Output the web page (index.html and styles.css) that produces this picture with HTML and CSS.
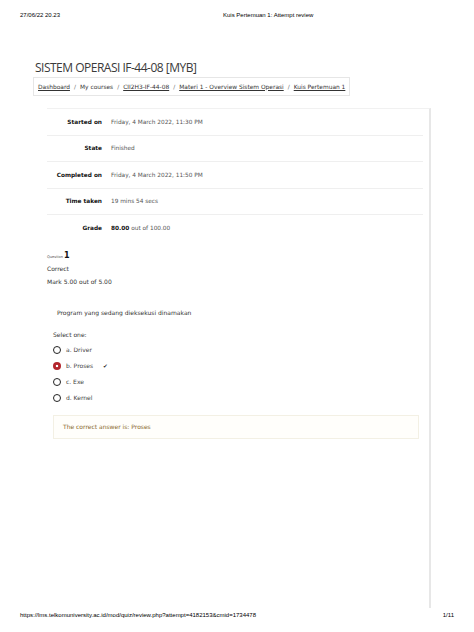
FILE: index.html
```html
<!DOCTYPE html>
<html>
<head>
<meta charset="utf-8">
<link rel="stylesheet" href="styles.css">
</head>
<body>
<div class="page">
  <header class="print-head">
    <span class="date">27/06/22 20.23</span>
    <span class="doc-title">Kuis Pertemuan 1: Attempt review</span>
  </header>

  <main class="main">
    <h1 class="course">SISTEM OPERASI IF-44-08 [MYB]</h1>
    <nav class="crumbs">
      <a href="#">Dashboard</a><span class="sep">/</span><span class="plain">My courses</span><span class="sep">/</span><a href="#">CII2H3-IF-44-08</a><span class="sep">/</span><a href="#">Materi 1 - Overview Sistem Operasi</a><span class="sep">/</span><a href="#">Kuis Pertemuan 1</a>
    </nav>

    <section class="panel">
      <div class="summary">
        <div class="row"><div class="lbl">Started on</div><div class="val">Friday, 4 March 2022, 11:30 PM</div></div>
        <div class="row"><div class="lbl">State</div><div class="val">Finished</div></div>
        <div class="row"><div class="lbl">Completed on</div><div class="val">Friday, 4 March 2022, 11:50 PM</div></div>
        <div class="row"><div class="lbl">Time taken</div><div class="val">19 mins 54 secs</div></div>
        <div class="row last"><div class="lbl">Grade</div><div class="val"><b>80.00</b> out of 100.00</div></div>
      </div>

      <div class="qinfo">
        <div class="qno"><span class="qword">Question</span><span class="qnum">1</span></div>
        <div class="qstate">Correct</div>
        <div class="qmark">Mark 5.00 out of 5.00</div>
      </div>

      <div class="qtext">Program yang sedang dieksekusi dinamakan</div>

      <div class="answers">
        <div class="prompt">Select one:</div>
        <div class="opt"><span class="radio"></span><span class="olbl">a. Driver</span></div>
        <div class="opt"><span class="radio on"></span><span class="olbl">b. Proses</span><span class="tick">&#10004;</span></div>
        <div class="opt"><span class="radio"></span><span class="olbl">c. Exe</span></div>
        <div class="opt"><span class="radio"></span><span class="olbl">d. Kernel</span></div>
      </div>

      <div class="feedback">The correct answer is: Proses</div>
    </section>
  </main>

  <footer class="print-foot">
    <span class="url">https://lms.telkomuniversity.ac.id/mod/quiz/review.php?attempt=4182153&amp;cmid=1734478</span>
    <span class="pg">1/11</span>
  </footer>
</div>
</body>
</html>
```

FILE: styles.css
```css
* { box-sizing: border-box; }
html, body { margin: 0; padding: 0; background: #fff; }
.page {
  width: 474px;
  height: 632px;
  position: relative;
  overflow: hidden;
  font-family: "DejaVu Sans", "Noto Sans", sans-serif;
  color: #1d2125;
}
.print-head {
  display: flex;
  padding: 12px 0 0 20px;
  height: 59px;
  font-family: "Liberation Sans", Arial, sans-serif;
  font-size: 6px;
  color: #000;
  line-height: 7px;
}
.print-head .date { width: 203px; }

.main { padding-left: 35px; }
.course {
  margin: 0;
  font-family: "Open Sans", "DejaVu Sans", sans-serif;
  font-weight: normal;
  font-size: 12px;
  line-height: 18px;
  color: #3a3a3a;
  letter-spacing: -0.5px;
  height: 18px;
}
.crumbs {
  display: flex;
  width: fit-content;
  align-items: center;
  height: 19px;
  margin-left: -2px;
  padding: 0 4px;
  border: 1px solid #e6e6e6;
  font-size: 5.9px;
  color: #333;
}
.crumbs a { color: #333; text-decoration: underline; }
.crumbs .sep { margin: 0 4px; color: #666; }

.panel {
  margin: 12px 0 0 12px;
  width: 384px;
  height: 500px;
  border-top: 1px solid #f1f1f1;
  border-right: 2px solid #e7e7e7;
  padding-right: 5px;
}
.summary { width: 376px; }
.row {
  display: flex;
  align-items: center;
  height: 26.5px;
  border-bottom: 1px solid #efefef;
  font-size: 5.8px;
}
.row.last { border-bottom: none; }
.lbl {
  width: 55px;
  text-align: right;
  font-weight: bold;
  color: #111;
}
.val { margin-left: 9px; color: #555; }
.val b { color: #111; }

.qinfo { margin-top: 9px; font-size: 6px; color: #333; }
.qno { display: flex; align-items: baseline; height: 12px; }
.qword { font-size: 3.6px; color: #555; }
.qnum { font-size: 8px; font-weight: bold; margin-left: 1px; color: #111; }
.qstate { height: 13px; line-height: 11px; }
.qmark { height: 12px; line-height: 12px; }

.qtext {
  margin: 21px 0 0 10px;
  font-size: 6px;
  color: #333;
}
.answers { margin: 15px 0 0 6px; font-size: 6px; color: #333; }
.prompt { height: 8px; line-height: 8px; margin-bottom: 3px; }
.opt { display: flex; align-items: center; height: 16px; }
.radio {
  width: 8px; height: 8px;
  border: 1.3px solid #222;
  border-radius: 50%;
  margin-right: 5px;
  flex: none;
}
.radio.on {
  border: none;
  background: radial-gradient(circle, #fff 0 1.3px, #b3262d 1.6px);
}
.olbl { color: #444; }
.tick { margin-left: 10px; font-size: 5.5px; color: #333; }

.feedback {
  margin: 9px 0 0 6px;
  width: 366px;
  height: 24px;
  padding-left: 9px;
  display: flex;
  align-items: center;
  border: 1px solid #f3f0e4;
  background: #fffefb;
  color: #8a6a2e;
  font-size: 6px;
}

.print-foot {
  position: absolute;
  left: 20px;
  top: 612px;
  width: 434px;
  display: flex;
  justify-content: space-between;
  font-family: "Liberation Sans", Arial, sans-serif;
  font-size: 6px;
  color: #000;
}
```
